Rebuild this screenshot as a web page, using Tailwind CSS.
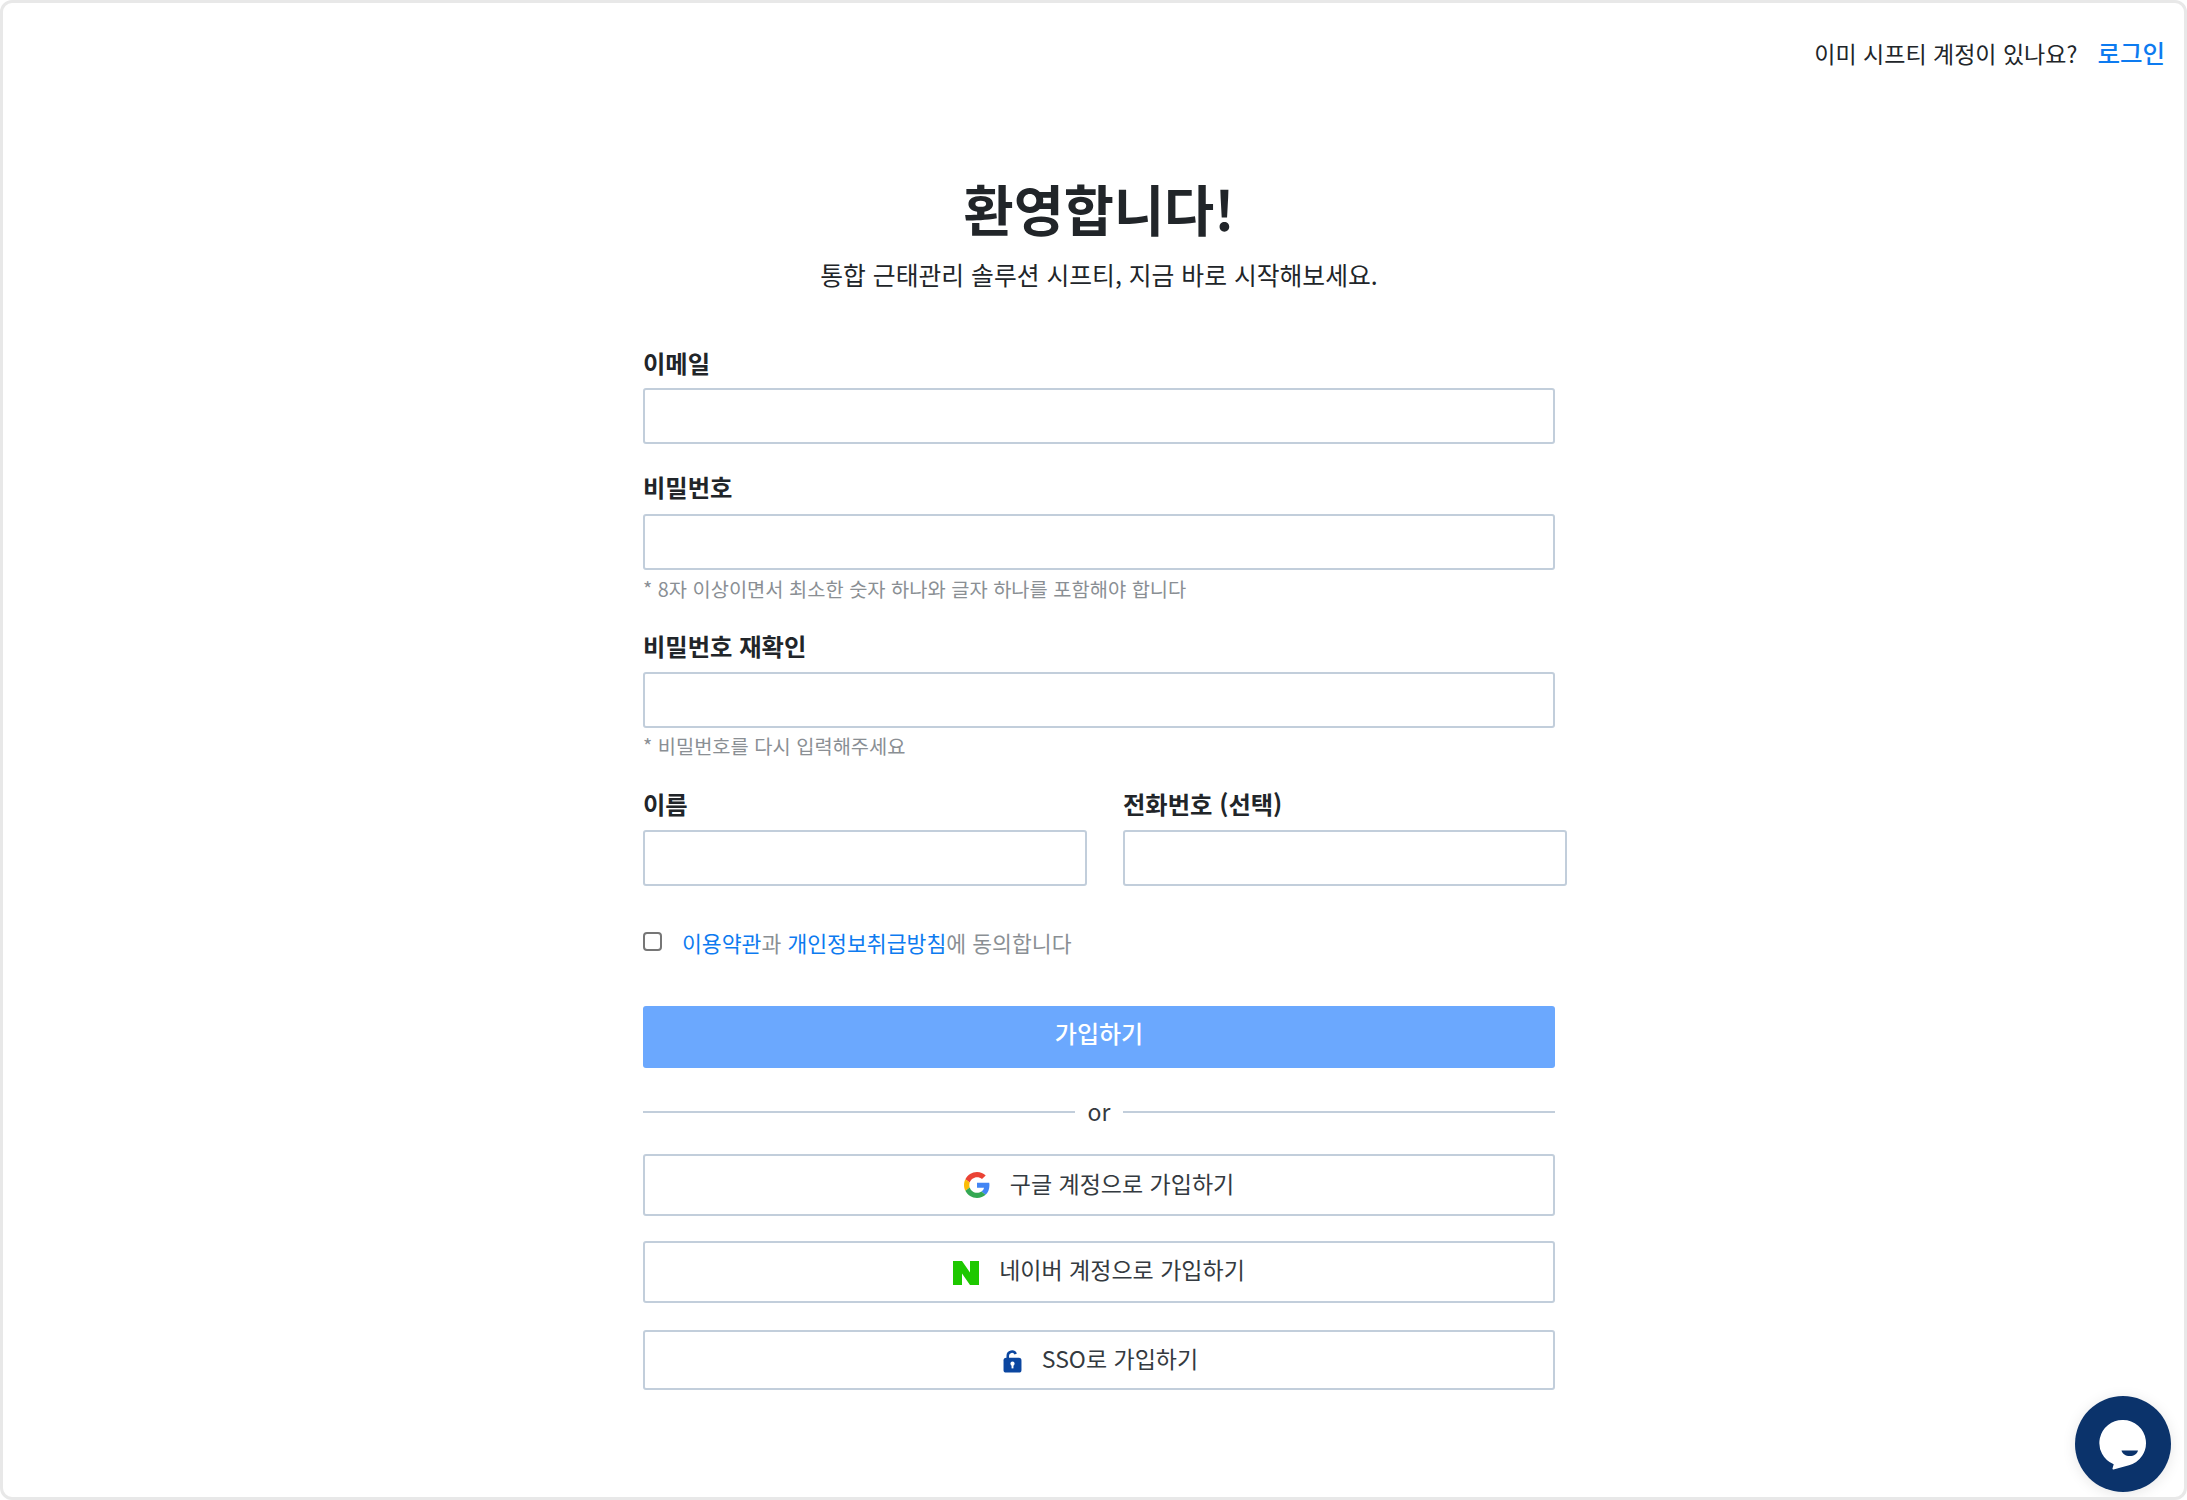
<!DOCTYPE html>
<html lang="ko">
<head>
<meta charset="UTF-8" />
<title>시프티 회원가입</title>
<script src="https://cdn.jsdelivr.net/npm/@tailwindcss/browser@4"></script>
</head>
<body class="bg-white font-['Noto_Sans_CJK_KR','Noto_Sans',sans-serif] text-[#212529]">
<div class="relative w-[2187px] h-[1500px] border-[3px] border-[#e8e8e8] rounded-[12px] overflow-hidden">

  <!-- Top right login -->
  <header class="flex justify-end items-center gap-[20px] h-[100px] pr-[19px] text-[23px] leading-[32px]">
    <span>이미 시프티 계정이 있나요?</span>
    <a class="text-[24.500px] font-medium text-[#0d7bf0]">로그인</a>
  </header>

  <main class="ml-[640px] w-[912px]">
    <div class="text-center">
      <h1 class="mt-[73px] text-[54.500px] leading-[64px] font-bold">환영합니다!</h1>
      <p class="mt-[16px] text-[24.800px] leading-[36px]">통합 근태관리 솔루션 시프티, 지금 바로 시작해보세요.</p>
    </div>

    <form class="mt-[55px]">
      <label class="block text-[24.300px] leading-[32px] font-bold">이메일</label>
      <input class="block mt-[9px] w-full h-[56px] border-2 border-[#c2cedb] rounded-[3px] bg-white" />

      <label class="block mt-[27px] text-[24.300px] leading-[32px] font-bold">비밀번호</label>
      <input class="block mt-[11px] w-full h-[56px] border-2 border-[#c2cedb] rounded-[3px] bg-white" />
      <p class="mt-[5px] text-[19.800px] leading-[28px] text-[#8a8f94]">* 8자 이상이면서 최소한 숫자 하나와 글자 하나를 포함해야 합니다</p>

      <label class="block mt-[27px] text-[24.300px] leading-[32px] font-bold">비밀번호 재확인</label>
      <input class="block mt-[10px] w-full h-[56px] border-2 border-[#c2cedb] rounded-[3px] bg-white" />
      <p class="mt-[4px] text-[19.800px] leading-[28px] text-[#8a8f94]">* 비밀번호를 다시 입력해주세요</p>

      <div class="grid grid-cols-[444px_444px] gap-x-[36px] w-[924px] mt-[28px]">
        <div>
          <label class="block text-[24.300px] leading-[32px] font-bold">이름</label>
          <input class="block mt-[10px] w-full h-[56px] border-2 border-[#c2cedb] rounded-[3px] bg-white" />
        </div>
        <div>
          <label class="block text-[24.300px] leading-[32px] font-bold">전화번호 (선택)</label>
          <input class="block mt-[10px] w-full h-[56px] border-2 border-[#c2cedb] rounded-[3px] bg-white" />
        </div>
      </div>

      <div class="flex items-center gap-[20px] mt-[41px] h-[32px]">
        <span class="block w-[19px] h-[19px] border-2 border-[#767676] rounded-[4px] bg-white -mt-[4px]"></span>
        <p class="text-[21.600px] leading-[32px] text-[#8a8f94]"><a class="text-[#0d7bf0]">이용약관</a>과 <a class="text-[#0d7bf0]">개인정보취급방침</a>에 동의합니다</p>
      </div>

      <button type="button" class="block mt-[47px] w-full h-[62px] pb-[8px] bg-[#6ba8fe] rounded-[3px] text-white text-[24px] font-medium">가입하기</button>

      <div class="flex items-center mt-[28px] h-[32px]">
        <span class="flex-1 h-[2px] bg-[#c2cedb]"></span>
        <span class="w-[48px] -mt-[2px] text-center text-[23px] leading-[32px] text-[#343a40]">or</span>
        <span class="flex-1 h-[2px] bg-[#c2cedb]"></span>
      </div>

      <button type="button" class="flex items-center justify-center gap-[20px] mt-[26px] w-full h-[62px] pb-[3px] border-2 border-[#c2cedb] rounded-[3px] text-[23px] text-[#343a40]">
        <svg class="w-[26px] h-[26px] mt-[3px]" viewBox="0 0 48 48">
          <path fill="#EA4335" d="M24 9.5c3.54 0 6.71 1.22 9.21 3.6l6.85-6.85C35.9 2.38 30.47 0 24 0 14.62 0 6.51 5.38 2.56 13.22l7.98 6.19C12.430 13.72 17.74 9.5 24 9.5z"/>
          <path fill="#4285F4" d="M46.98 24.55c0-1.57-.15-3.09-.38-4.55H24v9.02h12.94c-.58 2.96-2.26 5.48-4.78 7.18l7.73 6c4.51-4.18 7.09-10.36 7.09-17.65z"/>
          <path fill="#FBBC05" d="M10.53 28.59c-.48-1.45-.76-2.99-.76-4.59s.27-3.14.76-4.59l-7.98-6.19C.92 16.46 0 20.12 0 24c0 3.88.92 7.54 2.56 10.78l7.97-6.19z"/>
          <path fill="#34A853" d="M24 48c6.48 0 11.93-2.13 15.89-5.81l-7.73-6c-2.15 1.45-4.92 2.3-8.16 2.3-6.26 0-11.57-4.22-13.47-9.91l-7.98 6.19C6.51 42.62 14.62 48 24 48z"/>
        </svg>
        <span>구글 계정으로 가입하기</span>
      </button>

      <button type="button" class="flex items-center justify-center gap-[20px] mt-[25px] w-full h-[62px] pb-[5px] border-2 border-[#c2cedb] rounded-[3px] text-[23px] text-[#343a40]">
        <svg class="w-[26px] h-[24px] mt-[6px]" viewBox="0 0 26 24"><path fill="#1ec800" d="M0 0h9l8 11.500V0h9v24h-9L9 12.500V24H0z"/></svg>
        <span>네이버 계정으로 가입하기</span>
      </button>

      <button type="button" class="flex items-center justify-center gap-[20px] mt-[27px] w-full h-[60px] pl-[3px] pb-[4px] border-2 border-[#c2cedb] rounded-[3px] text-[23px] text-[#343a40]">
        <svg class="w-[19px] h-[24px] mt-[5px]" viewBox="0 0 18 22"><path fill="none" stroke="#0b46a0" stroke-width="2.400" d="M4.500 9V6a4 4 0 0 1 7.600-1.700"/><rect x="0.500" y="8" width="17" height="14" rx="2.500" fill="#0b46a0"/><circle cx="9" cy="13.500" r="2" fill="#fff"/><rect x="8.100" y="14" width="1.800" height="4" fill="#fff"/></svg>
        <span>SSO로 가입하기</span>
      </button>
    </form>
  </main>

  <!-- Chat launcher -->
  <div class="absolute right-[13px] bottom-[5px] flex items-center justify-center w-[96px] h-[96px] rounded-full bg-[#0b336b] shadow-[0_2px_14px_rgba(0,0,0,0.1)]">
    <svg class="w-[50px] h-[52px]" viewBox="0 0 50 52">
      <path fill="#fff" d="M25 2a23 23 0 0 1 6 45.200L15.500 51.500c-.8.200-1.200-.4-1-1l1.200-4.200A23 23 0 0 1 25 2z"/>
      <path fill="#0b336b" d="M23.500 32.500h16.500c-.8 3.300-4 5.600-8.200 5.600s-7.500-2.300-8.300-5.600z"/>
    </svg>
  </div>
</div>
</body>
</html>
